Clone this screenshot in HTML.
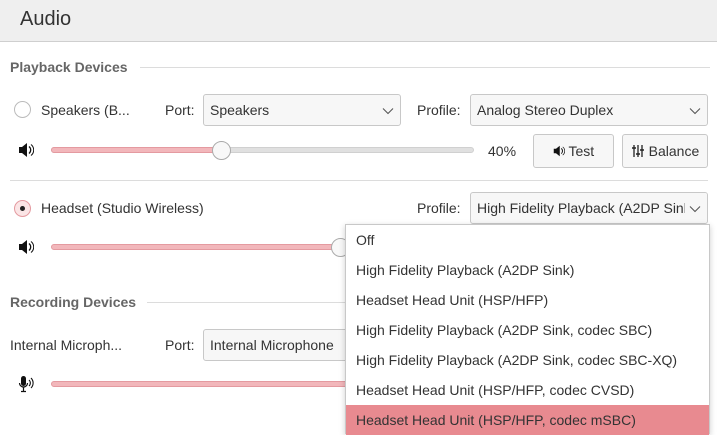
<!DOCTYPE html>
<html><head><meta charset="utf-8"><style>
*{box-sizing:border-box;margin:0;padding:0}
body{width:717px;height:432px;overflow:hidden;background:#fff;font-family:"Liberation Sans","DejaVu Sans",sans-serif;font-size:14px;color:#333;position:relative}
.a{position:absolute;white-space:nowrap}
.hdr{left:0;top:0;width:717px;height:42px;background:#efefef;border-bottom:1px solid #cfcfcf}
.sec{font-weight:bold;color:#666;font-size:14px}
.ln{height:1px;background:#dcdcdc}
.combo{background:#f7f7f7;border:1px solid #c8c8c8;border-radius:3px;height:32px;padding:0 6px;line-height:31px}
.combo svg{position:absolute;right:6px;top:12px}
.radio{width:17px;height:17px;border-radius:50%;border:1px solid #bbb;background:#fff}
.track{height:6px;border-radius:3px;background:#e0e0e0;border:1px solid #d0d0d0}
.fill{height:6px;border-radius:3px;background:#f2b7bb;border:1px solid #e49aa0}
.knob{width:19px;height:19px;border-radius:50%;background:#f8f8f8;border:1px solid #aaa}
.btn{background:#f7f7f7;border:1px solid #c8c8c8;border-radius:3px;height:34px;line-height:33px;text-align:center}
.menu{left:345px;top:224px;width:365px;height:210px;background:#fff;border:1px solid #c8c8c8;box-shadow:0 2px 6px rgba(0,0,0,.2)}
.it{position:absolute;left:10px;height:30px;line-height:30px}
</style></head><body>
<svg width="0" height="0" style="position:absolute"><defs>
<symbol id="chev" viewBox="0 0 12 8"><path d="M1 1.5 L6 6.5 L11 1.5" fill="none" stroke="#555" stroke-width="1.1"/></symbol>
<symbol id="spk" viewBox="0 0 16 16"><path d="M1 5h3l5-4v14l-5-4H1z" fill="#111"/><path d="M11 4.5a4.5 4.5 0 0 1 0 7" fill="none" stroke="#111" stroke-width="1.3"/><path d="M13 2.5a7 7 0 0 1 0 11" fill="none" stroke="#111" stroke-width="1"/></symbol>
<symbol id="mic" viewBox="0 0 16 18"><rect x="3" y="1" width="5" height="10" rx="2.5" fill="#111"/><path d="M1.5 8a4 4 0 0 0 8 0M5.5 12v4M3 16.5h5" fill="none" stroke="#111" stroke-width="1.2"/><path d="M11 5a4 4 0 0 1 0 6M13 3a7 7 0 0 1 0 10" fill="none" stroke="#111" stroke-width="1.1"/></symbol>
</defs></svg>
<div class="a hdr"></div>
<div class="a" style="left:20px;top:8px;font-size:20px;color:#333">Audio</div>

<div class="a sec" style="left:10px;top:59px">Playback Devices</div>
<div class="a ln" style="left:140px;top:67px;width:570px"></div>

<div class="a radio" style="left:14px;top:101px"></div>
<div class="a" style="left:41px;top:102px">Speakers (B...</div>
<div class="a" style="left:165px;top:102px">Port:</div>
<div class="a combo" style="left:203px;top:94px;width:198px">Speakers<svg width="12" height="8"><use href="#chev"/></svg></div>
<div class="a" style="left:417px;top:102px">Profile:</div>
<div class="a combo" style="left:470px;top:94px;width:238px">Analog Stereo Duplex<svg width="12" height="8"><use href="#chev"/></svg></div>

<svg class="a" style="left:18px;top:142px" width="16" height="16"><use href="#spk"/></svg>
<div class="a track" style="left:51px;top:147px;width:423px"></div>
<div class="a fill" style="left:51px;top:147px;width:172px"></div>
<div class="a knob" style="left:212px;top:141px"></div>
<div class="a" style="left:488px;top:143px">40%</div>
<div class="a btn" style="left:533px;top:134px;width:81px"><svg width="12" height="12" style="vertical-align:-1px"><use href="#spk"/></svg> Test</div>
<div class="a btn" style="left:622px;top:134px;width:86px"><svg width="14" height="14" viewBox="0 0 14 14" style="vertical-align:-2px"><path d="M3 1v12M7 1v12M11 1v12" stroke="#222" stroke-width="1.3"/><path d="M1 4h4M5 10h4M9 6h4" stroke="#222" stroke-width="1.6"/></svg> Balance</div>

<div class="a ln" style="left:10px;top:180px;width:698px"></div>

<div class="a radio" style="left:14px;top:200px;border-color:#e49aa0;background:#fbe5e6"></div>
<div class="a" style="left:20px;top:206px;width:5px;height:5px;border-radius:50%;background:#222"></div>
<div class="a" style="left:41px;top:200px">Headset (Studio Wireless)</div>
<div class="a" style="left:417px;top:200px">Profile:</div>
<div class="a combo" style="left:470px;top:192px;width:238px;overflow:hidden">High Fidelity Playback (A2DP Sink)<span style="position:absolute;right:0;top:0;width:22px;height:30px;background:#f7f7f7"></span><svg width="12" height="8"><use href="#chev"/></svg></div>

<svg class="a" style="left:18px;top:239px" width="16" height="16"><use href="#spk"/></svg>
<div class="a fill" style="left:51px;top:244px;width:295px"></div>
<div class="a knob" style="left:331px;top:238px"></div>

<div class="a sec" style="left:10px;top:294px">Recording Devices</div>
<div class="a ln" style="left:147px;top:302px;width:200px"></div>

<div class="a" style="left:10px;top:337px">Internal Microph...</div>
<div class="a" style="left:165px;top:337px">Port:</div>
<div class="a combo" style="left:203px;top:329px;width:160px">Internal Microphone</div>
<svg class="a" style="left:18px;top:375px" width="16" height="18"><use href="#mic"/></svg>
<div class="a fill" style="left:51px;top:381px;width:300px"></div>

<div class="a menu">
<div class="it" style="top:0px">Off</div>
<div class="it" style="top:30px">High Fidelity Playback (A2DP Sink)</div>
<div class="it" style="top:60px">Headset Head Unit (HSP/HFP)</div>
<div class="it" style="top:90px">High Fidelity Playback (A2DP Sink, codec SBC)</div>
<div class="it" style="top:120px">High Fidelity Playback (A2DP Sink, codec SBC-XQ)</div>
<div class="it" style="top:150px">Headset Head Unit (HSP/HFP, codec CVSD)</div>
<div style="position:absolute;left:0;top:180px;width:363px;height:30px;background:#e88a90"></div>
<div class="it" style="top:180px">Headset Head Unit (HSP/HFP, codec mSBC)</div>
</div>
</body></html>
